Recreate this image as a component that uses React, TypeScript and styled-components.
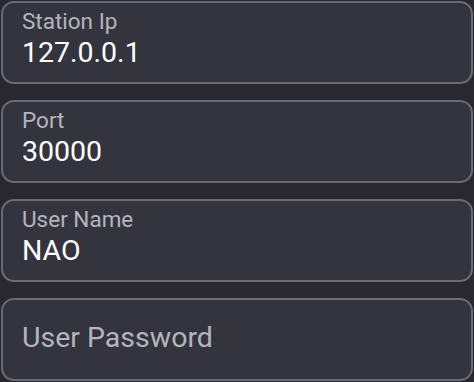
import React from "react";
import styled, { createGlobalStyle } from "styled-components";

const GlobalStyle = createGlobalStyle`
  html, body {
    margin: 0;
    padding: 0;
    background: #292830;
  }
  body {
    font-family: Roboto, "Noto Sans", sans-serif;
  }
`;

const Form = styled.div`
  display: flex;
  flex-direction: column;
  gap: 16px;
  padding: 1px 1px 0 1px;
  width: 472px;
`;

const Field = styled.label<{ $empty?: boolean }>`
  box-sizing: border-box;
  height: 83px;
  display: flex;
  flex-direction: column;
  justify-content: ${(p) => (p.$empty ? "center" : "flex-start")};
  padding: ${(p) => (p.$empty ? "0 19px" : "5px 19px 0")};
  background: #34343e;
  border: 2px solid #6b6b75;
  border-radius: 13px;
`;

const Label = styled.span`
  font-size: 22.5px;
  line-height: 26px;
  color: #b5b5bd;
`;

const Input = styled.input`
  all: unset;
  margin-top: 3px;
  font-family: Roboto, "Noto Sans", sans-serif;
  font-size: 28.5px;
  line-height: 32px;
  color: #ffffff;
  &::placeholder {
    color: #b5b5bd;
    opacity: 1;
  }
`;

const PlaceholderInput = styled(Input)`
  margin-top: 0;
  margin-bottom: 4px;
`;

const fields = [
  { label: "Station Ip", value: "127.0.0.1" },
  { label: "Port", value: "30000" },
  { label: "User Name", value: "NAO" },
];

export default function App() {
  return (
    <>
      <GlobalStyle />
      <Form>
        {fields.map((f) => (
          <Field key={f.label}>
            <Label>{f.label}</Label>
            <Input value={f.value} readOnly />
          </Field>
        ))}
        <Field $empty>
          <PlaceholderInput type="password" placeholder="User Password" />
        </Field>
      </Form>
    </>
  );
}
